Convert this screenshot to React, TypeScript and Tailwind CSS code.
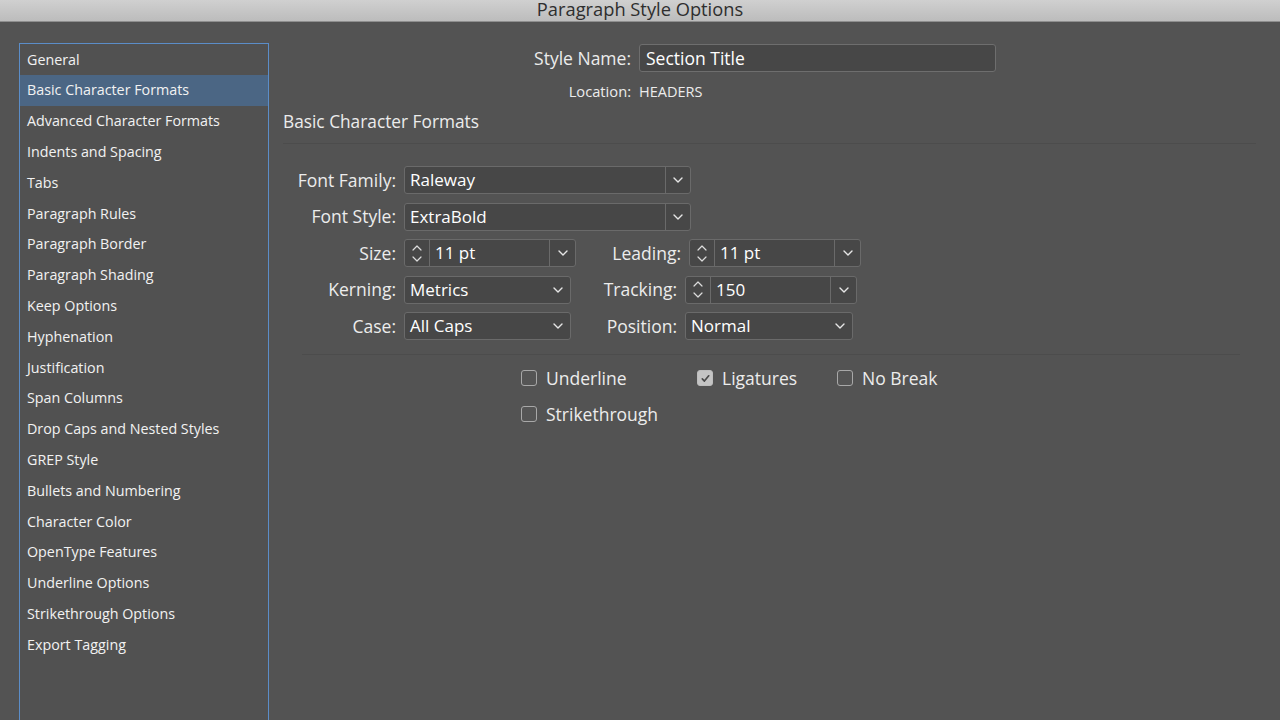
import type { ReactNode } from 'react'

const font = "font-['Open_Sans',_'Liberation_Sans',_sans-serif]"

const sections = [
  'General',
  'Basic Character Formats',
  'Advanced Character Formats',
  'Indents and Spacing',
  'Tabs',
  'Paragraph Rules',
  'Paragraph Border',
  'Paragraph Shading',
  'Keep Options',
  'Hyphenation',
  'Justification',
  'Span Columns',
  'Drop Caps and Nested Styles',
  'GREP Style',
  'Bullets and Numbering',
  'Character Color',
  'OpenType Features',
  'Underline Options',
  'Strikethrough Options',
  'Export Tagging',
]

function Chevron({ className = '' }: { className?: string }) {
  return (
    <svg viewBox="0 0 10 6" className={'h-[6px] w-[10px] ' + className} fill="none">
      <path d="M1 1l4 4 4-4" stroke="#e6e6e6" strokeWidth="1.4" strokeLinecap="round" strokeLinejoin="round" />
    </svg>
  )
}

function Stepper() {
  return (
    <div className="flex h-full w-[25px] shrink-0 flex-col items-center justify-center gap-[5px] border-r border-[#6a6a6a]">
      <svg viewBox="0 0 10 6" className="h-[6px] w-[10px]" fill="none">
        <path d="M1 5l4-4 4 4" stroke="#dcdcdc" strokeWidth="1.2" strokeLinecap="round" strokeLinejoin="round" />
      </svg>
      <svg viewBox="0 0 10 6" className="h-[6px] w-[10px]" fill="none">
        <path d="M1 1l4 4 4-4" stroke="#dcdcdc" strokeWidth="1.2" strokeLinecap="round" strokeLinejoin="round" />
      </svg>
    </div>
  )
}

function Label({ w, children }: { w: string; children: ReactNode }) {
  return <div className={w + ' shrink-0 pr-2 text-right text-[17.5px] text-[#ececec]'}>{children}</div>
}

// combo with separate chevron button
function Combo({ value, w }: { value: string; w: string }) {
  return (
    <div className={w + ' flex h-[28px] shrink-0 items-stretch rounded-[3px] border border-[#6a6a6a] bg-[#474747]'}>
      <div className="flex flex-1 items-center px-[5px] text-[17px] text-white">{value}</div>
      <div className="flex w-[25px] items-center justify-center border-l border-[#6a6a6a]">
        <Chevron />
      </div>
    </div>
  )
}

function StepCombo({ value, w }: { value: string; w: string }) {
  return (
    <div className={w + ' flex h-[28px] shrink-0 items-stretch rounded-[3px] border border-[#6a6a6a] bg-[#474747]'}>
      <Stepper />
      <div className="flex flex-1 items-center px-[5px] text-[17px] text-white">{value}</div>
      <div className="flex w-[26px] items-center justify-center border-l border-[#6a6a6a]">
        <Chevron />
      </div>
    </div>
  )
}

function Select({ value, w }: { value: string; w: string }) {
  return (
    <div className={w + ' flex h-[28px] shrink-0 items-center justify-between rounded-[3px] border border-[#6a6a6a] bg-[#474747] pl-[5px] pr-[7px]'}>
      <span className="text-[17px] text-white">{value}</span>
      <Chevron />
    </div>
  )
}

function Check({ label, checked = false }: { label: string; checked?: boolean }) {
  return (
    <div className="flex h-[24px] items-center gap-[9px]">
      <div
        className={
          'flex h-[16px] w-[16px] items-center justify-center rounded-[3px] border ' +
          (checked ? 'border-[#bdbdbd] bg-[#c4c4c4]' : 'border-[#a8a8a8] bg-[#555555]')
        }
      >
        {checked && (
          <svg viewBox="0 0 12 12" className="h-[11px] w-[11px]" fill="none">
            <path d="M2.5 6.5l2.3 2.3L9.5 3" stroke="#4a4a4a" strokeWidth="1.8" strokeLinecap="round" strokeLinejoin="round" />
          </svg>
        )}
      </div>
      <span className="text-[17.5px] text-[#ececec]">{label}</span>
    </div>
  )
}

export default function App() {
  return (
    <div className={font + ' flex h-[720px] w-[1280px] flex-col overflow-hidden bg-[#535353]'}>
      <div className="flex h-[22px] shrink-0 justify-center border-b border-[#8e8e8e] bg-gradient-to-b from-[#d0d0d0] to-[#bcbcbc] text-[18.3px] leading-[17px] text-[#2e2e2e]">
        Paragraph Style Options
      </div>

      <div className="flex flex-1">
        {/* section list */}
        <div className="ml-[19px] mt-[21px] w-[250px] shrink-0 border border-b-0 border-[#5b8dc8] bg-[#515151]">
          {sections.map((s, i) => (
            <div
              key={s}
              className={
                'flex h-[30.8px] items-center pl-[7px] text-[14.3px] text-[#f2f2f2] ' +
                (i === 1 ? 'bg-[#4b6684]' : '')
              }
            >
              {s}
            </div>
          ))}
        </div>

        {/* options */}
        <div className="flex flex-1 flex-col pl-[14px] pt-[22px]">
          <div className="flex items-center">
            <Label w="w-[356px]">Style Name:</Label>
            <div className="flex h-[28px] w-[357px] items-center rounded-[3px] border border-[#6e6e6e] bg-[#474747] px-[6px] text-[17.5px] text-white">
              Section Title
            </div>
          </div>
          <div className="mt-[8px] flex h-[22px] items-baseline">
            <div className="w-[356px] shrink-0 pr-2 text-right text-[14.7px] text-[#ececec]">Location:</div>
            <span className="text-[14.5px] text-[#ececec]">HEADERS</span>
          </div>

          <div className="mt-[8px] text-[17.3px] leading-[24px] text-[#ececec]">Basic Character Formats</div>
          <div className="mt-[9px] mr-[24px] h-px bg-[#4c4c4c]" />

          <div className="mt-[22px] flex flex-col gap-[8.5px]">
            <div className="flex items-center">
              <Label w="w-[121px]">Font Family:</Label>
              <Combo value="Raleway" w="w-[287px]" />
            </div>
            <div className="flex items-center">
              <Label w="w-[121px]">Font Style:</Label>
              <Combo value="ExtraBold" w="w-[287px]" />
            </div>
            <div className="flex items-center">
              <Label w="w-[121px]">Size:</Label>
              <StepCombo value="11 pt" w="w-[172px]" />
              <Label w="w-[113px]">Leading:</Label>
              <StepCombo value="11 pt" w="w-[172px]" />
            </div>
            <div className="flex items-center">
              <Label w="w-[121px]">Kerning:</Label>
              <Select value="Metrics" w="w-[167px]" />
              <Label w="w-[114px]">Tracking:</Label>
              <StepCombo value="150" w="w-[172px]" />
            </div>
            <div className="flex items-center">
              <Label w="w-[121px]">Case:</Label>
              <Select value="All Caps" w="w-[167px]" />
              <Label w="w-[114px]">Position:</Label>
              <Select value="Normal" w="w-[168px]" />
            </div>
          </div>

          <div className="mt-[14px] ml-[19px] mr-[40px] h-px bg-[#4c4c4c]" />

          <div className="mt-[11px] grid grid-cols-[176px_140px_140px] gap-y-[12px] pl-[238px]">
            <Check label="Underline" />
            <Check label="Ligatures" checked />
            <Check label="No Break" />
            <Check label="Strikethrough" />
          </div>
        </div>
      </div>
    </div>
  )
}
